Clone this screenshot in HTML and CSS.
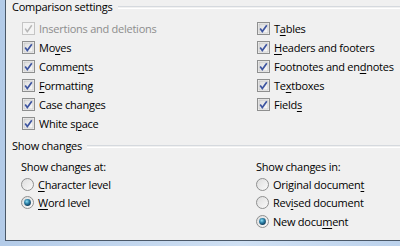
FILE: index.html
```html
<!DOCTYPE html>
<html lang="en">
<head>
	<meta charset="UTF-8">
	<title>Compare settings</title>
	<link rel="stylesheet" href="styles.css">
</head>
<body>
	<svg class="defs" width="0" height="0">
		<defs>
			<linearGradient id="boxfill" x1="0" y1="0" x2="1" y2="1">
				<stop offset="0" stop-color="#dcdcdc"/>
				<stop offset="1" stop-color="#fbfbfb"/>
			</linearGradient>
			<radialGradient id="dot" cx="0.4" cy="0.35" r="0.7">
				<stop offset="0" stop-color="#8fe0f6"/>
				<stop offset="0.5" stop-color="#2a7ea5"/>
				<stop offset="1" stop-color="#0f3552"/>
			</radialGradient>
			<symbol id="chk" viewBox="0 0 13 13">
				<rect x="0.5" y="0.5" width="12" height="12" fill="#f4f4f4" stroke="#8e8f8f"/>
				<rect x="2" y="2" width="9" height="9" fill="url(#boxfill)" stroke="#b8b8b8" stroke-width="0.6"/>
				<path d="M3.2 6.6 L5.3 9.6 L9.8 3.2" fill="none" stroke="#3e55a0" stroke-width="1.7"/>
			</symbol>
			<symbol id="chk-off" viewBox="0 0 13 13">
				<rect x="0.5" y="0.5" width="12" height="12" fill="#f4f4f4" stroke="#c5c5c5"/>
				<path d="M3.2 6.6 L5.3 9.6 L9.8 3.2" fill="none" stroke="#b7b7b7" stroke-width="1.5"/>
			</symbol>
			<symbol id="rad" viewBox="0 0 13 13">
				<circle cx="6.5" cy="6.5" r="6" fill="url(#boxfill)" stroke="#8e8f8f"/>
			</symbol>
			<symbol id="rad-on" viewBox="0 0 13 13">
				<circle cx="6.5" cy="6.5" r="6" fill="url(#boxfill)" stroke="#8e8f8f"/>
				<circle cx="6.5" cy="6.5" r="3.4" fill="url(#dot)"/>
			</symbol>
		</defs>
	</svg>

	<div class="frame">
		<div class="dialog">
			<div class="legend"><span>Comparison settings</span><i></i></div>
			<div class="opts">
				<div class="col">
					<label class="opt off"><svg><use href="#chk-off"/></svg>Insertions and deletions</label>
					<label class="opt"><svg><use href="#chk"/></svg>Mo<u>v</u>es</label>
					<label class="opt"><svg><use href="#chk"/></svg>Comme<u>n</u>ts</label>
					<label class="opt"><svg><use href="#chk"/></svg><u>F</u>ormatting</label>
					<label class="opt"><svg><use href="#chk"/></svg>Case changes</label>
					<label class="opt"><svg><use href="#chk"/></svg>White s<u>p</u>ace</label>
				</div>
				<div class="col">
					<label class="opt"><svg><use href="#chk"/></svg>T<u>a</u>bles</label>
					<label class="opt"><svg><use href="#chk"/></svg><u>H</u>eaders and footers</label>
					<label class="opt"><svg><use href="#chk"/></svg>Footnotes and en<u>d</u>notes</label>
					<label class="opt"><svg><use href="#chk"/></svg>Te<u>x</u>tboxes</label>
					<label class="opt"><svg><use href="#chk"/></svg>Field<u>s</u></label>
				</div>
			</div>

			<div class="legend second"><span>Show changes</span><i></i></div>
			<div class="opts radios">
				<div class="col">
					<div class="sub">Show changes at:</div>
					<label class="opt"><svg><use href="#rad"/></svg><u>C</u>haracter level</label>
					<label class="opt"><svg><use href="#rad-on"/></svg><u>W</u>ord level</label>
				</div>
				<div class="col">
					<div class="sub">Show changes in:</div>
					<label class="opt"><svg><use href="#rad"/></svg>Original documen<u>t</u></label>
					<label class="opt"><svg><use href="#rad"/></svg>Rev<u>i</u>sed document</label>
					<label class="opt"><svg><use href="#rad-on"/></svg>New docu<u>m</u>ent</label>
				</div>
			</div>
		</div>
	</div>
</body>
</html>
```
FILE: styles.css
```css
body{
	margin: 0;
	font-family: "Open Sans", "Noto Sans", sans-serif;
	font-size: 11px;
	letter-spacing: -0.25px;
	color: #000;
	background: #c9dcf1;
}
.defs{
	position: absolute;
}
.frame{
	height: 246px;
	padding: 0 0 5px 5px;
	box-sizing: border-box;
	background: linear-gradient(90deg, #b3cbe8, #cfe0f3 60%, #bcd2ec);
}
.dialog{
	height: 100%;
	box-sizing: border-box;
	background: #f0f0f0;
	border-left: 1px solid #4a5868;
	border-bottom: 1px solid #4a5868;
	padding-left: 6px;
}
.legend{
	display: flex;
	align-items: center;
	height: 14px;
	line-height: 14px;
}
.legend span{
	padding-right: 5px;
}
.legend i{
	flex: 1;
	height: 1px;
	border-top: 1px solid #d5d9de;
	border-bottom: 1px solid #fff;
}
.legend.second{
	margin-top: 6px;
}
.opts{
	display: grid;
	grid-template-columns: 235px 1fr;
	padding-left: 10px;
	margin-top: 5px;
}
.col{
	display: flex;
	flex-direction: column;
}
.opt{
	display: flex;
	align-items: center;
	height: 19px;
}
.opt svg{
	width: 13px;
	height: 13px;
	margin-right: 4px;
	flex: none;
}
.opt.off{
	color: #8d8d8d;
}
.opt u{
	text-decoration-thickness: 1px;
	text-underline-offset: 2px;
}
.radios{
	margin-top: 6px;
	padding-left: 9px;
}
.sub{
	height: 16px;
	line-height: 16px;
}
.radios .opt{
	height: 18.5px;
}
```
